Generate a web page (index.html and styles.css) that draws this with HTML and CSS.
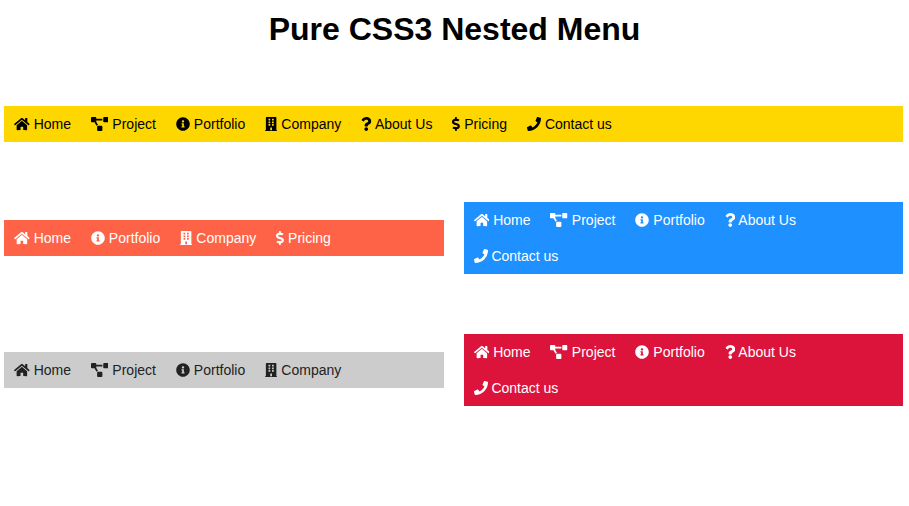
FILE: index.html
```html
<!DOCTYPE html>
<html>
<head>
<meta charset="UTF-8">
<title>Pure CSS3 Nested Menu</title>
<link rel="stylesheet" href="styles.css">
</head>
<body>
<svg class="defs" xmlns="http://www.w3.org/2000/svg">
  <symbol id="i-home" viewBox="0 0 576 512"><path d="M280.37 148.26L96 300.11V464a16 16 0 0 0 16 16l112.06-.29a16 16 0 0 0 15.92-16V368a16 16 0 0 1 16-16h64a16 16 0 0 1 16 16v95.64a16 16 0 0 0 16 16.05L464 480a16 16 0 0 0 16-16V300L295.67 148.26a12.19 12.19 0 0 0-15.3 0zM571.6 251.47L488 182.56V44.05a12 12 0 0 0-12-12h-56a12 12 0 0 0-12 12v72.61L318.47 43a48 48 0 0 0-61 0L4.34 251.47a12 12 0 0 0-1.6 16.9l25.5 31A12 12 0 0 0 45.15 301l235.22-193.74a12.19 12.19 0 0 1 15.3 0L530.9 301a12 12 0 0 0 16.9-1.6l25.5-31a12 12 0 0 0-1.7-16.93z"/></symbol>
  <symbol id="i-project" viewBox="0 0 640 512"><path d="M384 320H256c-17.67 0-32 14.33-32 32v128c0 17.67 14.33 32 32 32h128c17.67 0 32-14.33 32-32V352c0-17.67-14.33-32-32-32zM192 32c0-17.67-14.33-32-32-32H32C14.33 0 0 14.33 0 32v128c0 17.67 14.33 32 32 32h95.72l73.16 128.04C211.98 300.98 232.4 288 256 288h.28L192 175.51V128h224V64H192V32zM608 0H480c-17.67 0-32 14.33-32 32v128c0 17.67 14.33 32 32 32h128c17.67 0 32-14.33 32-32V32c0-17.67-14.33-32-32-32z"/></symbol>
  <symbol id="i-info" viewBox="0 0 512 512"><path d="M256 8C119.043 8 8 119.083 8 256c0 136.997 111.043 248 248 248s248-111.003 248-248C504 119.083 392.957 8 256 8zm0 110c23.196 0 42 18.804 42 42s-18.804 42-42 42-42-18.804-42-42 18.804-42 42-42zm56 254c0 6.627-5.373 12-12 12h-88c-6.627 0-12-5.373-12-12v-24c0-6.627 5.373-12 12-12h12v-64h-12c-6.627 0-12-5.373-12-12v-24c0-6.627 5.373-12 12-12h64c6.627 0 12 5.373 12 12v100h12c6.627 0 12 5.373 12 12v24z"/></symbol>
  <symbol id="i-building" viewBox="0 0 448 512"><path d="M436 480h-20V24c0-13.255-10.745-24-24-24H56C42.745 0 32 10.745 32 24v456H12c-6.627 0-12 5.373-12 12v20h448v-20c0-6.627-5.373-12-12-12zM128 76c0-6.627 5.373-12 12-12h40c6.627 0 12 5.373 12 12v40c0 6.627-5.373 12-12 12h-40c-6.627 0-12-5.373-12-12V76zm0 96c0-6.627 5.373-12 12-12h40c6.627 0 12 5.373 12 12v40c0 6.627-5.373 12-12 12h-40c-6.627 0-12-5.373-12-12v-40zm52 148h-40c-6.627 0-12-5.373-12-12v-40c0-6.627 5.373-12 12-12h40c6.627 0 12 5.373 12 12v40c0 6.627-5.373 12-12 12zm76 160h-64v-84c0-6.627 5.373-12 12-12h40c6.627 0 12 5.373 12 12v84zm64-172c0 6.627-5.373 12-12 12h-40c-6.627 0-12-5.373-12-12v-40c0-6.627 5.373-12 12-12h40c6.627 0 12 5.373 12 12v40zm0-96c0 6.627-5.373 12-12 12h-40c-6.627 0-12-5.373-12-12v-40c0-6.627 5.373-12 12-12h40c6.627 0 12 5.373 12 12v40zm0-96c0 6.627-5.373 12-12 12h-40c-6.627 0-12-5.373-12-12V76c0-6.627 5.373-12 12-12h40c6.627 0 12 5.373 12 12v40z"/></symbol>
  <symbol id="i-question" viewBox="0 0 384 512"><path d="M202.021 0C122.202 0 70.503 32.703 29.914 91.026c-7.363 10.58-5.093 25.086 5.178 32.874l43.138 32.709c10.373 7.865 25.132 6.026 33.253-4.148 25.049-31.381 43.63-49.449 82.757-49.449 30.764 0 68.816 19.799 68.816 49.631 0 22.552-18.617 34.134-48.993 51.164-35.423 19.86-82.299 44.576-82.299 106.405V320c0 13.255 10.745 24 24 24h72.471c13.255 0 24-10.745 24-24v-5.773c0-42.86 125.268-44.645 125.268-160.627C377.504 66.256 286.902 0 202.021 0zM192 373.459c-38.196 0-69.271 31.075-69.271 69.271 0 38.195 31.075 69.27 69.271 69.27s69.271-31.075 69.271-69.271-31.075-69.27-69.271-69.27z"/></symbol>
  <symbol id="i-dollar" viewBox="0 0 288 512"><path d="M209.2 233.4l-108-31.6C88.7 198.2 80 186.5 80 173.5c0-16.3 13.2-29.5 29.5-29.5h66.3c12.2 0 24.2 3.7 34.2 10.5 6.1 4.1 14.3 3.1 19.5-2l34.8-34c7.1-6.9 6.1-18.4-1.8-24.5C238 74.8 207.4 64.1 176 64V16c0-8.8-7.2-16-16-16h-32c-8.8 0-16 7.2-16 16v48h-2.5C45.8 64-5.4 118.7.5 183.6c4.2 46.1 39.4 83.6 83.8 96.6l102.5 30c12.5 3.7 21.2 15.3 21.2 28.3 0 16.3-13.2 29.5-29.5 29.5h-66.3C100.5 368 88.5 364.3 78.5 357.5c-6.1-4.1-14.3-3.1-19.5 2l-34.8 34c-7.1 6.9-6.1 18.4 1.8 24.5 24.5 19.2 55.1 29.9 86.5 30v48c0 8.8 7.2 16 16 16h32c8.8 0 16-7.2 16-16v-48.2c46.6-.9 90.3-28.6 105.7-72.7 21.5-61.6-14.6-124.8-72.5-141.7z"/></symbol>
  <symbol id="i-phone" viewBox="0 0 512 512"><path d="M493.4 24.6l-104-24c-11.3-2.6-22.9 3.3-27.5 13.9l-48 112c-4.2 9.8-1.4 21.3 6.9 28l60.6 49.6c-36 76.7-98.9 140.5-177.2 177.2l-49.6-60.6c-6.8-8.3-18.2-11.1-28-6.9l-112 48C3.9 366.5-2 378.1.6 389.4l24 104C27.1 504.2 36.7 512 48 512c256.1 0 464-207.5 464-464 0-11.2-7.7-20.9-18.6-23.4z"/></symbol>
</svg>

<h1 class="title">Pure CSS3 Nested Menu</h1>

<div class="page">
  <ul class="menu full yellow">
    <li><a href="#"><svg class="icon" viewBox="0 0 576 512"><use href="#i-home"/></svg> Home</a></li>
    <li><a href="#"><svg class="icon" viewBox="0 0 640 512"><use href="#i-project"/></svg> Project</a></li>
    <li><a href="#"><svg class="icon" viewBox="0 0 512 512"><use href="#i-info"/></svg> Portfolio</a></li>
    <li><a href="#"><svg class="icon" viewBox="0 0 448 512"><use href="#i-building"/></svg> Company</a></li>
    <li><a href="#"><svg class="icon" viewBox="0 0 384 512"><use href="#i-question"/></svg> About Us</a></li>
    <li><a href="#"><svg class="icon" viewBox="0 0 288 512"><use href="#i-dollar"/></svg> Pricing</a></li>
    <li><a href="#"><svg class="icon" viewBox="0 0 512 512"><use href="#i-phone"/></svg> Contact us</a></li>
  </ul>

  <ul class="menu tomato">
    <li><a href="#"><svg class="icon" viewBox="0 0 576 512"><use href="#i-home"/></svg> Home</a></li>
    <li><a href="#"><svg class="icon" viewBox="0 0 512 512"><use href="#i-info"/></svg> Portfolio</a></li>
    <li><a href="#"><svg class="icon" viewBox="0 0 448 512"><use href="#i-building"/></svg> Company</a></li>
    <li><a href="#"><svg class="icon" viewBox="0 0 288 512"><use href="#i-dollar"/></svg> Pricing</a></li>
  </ul>

  <ul class="menu blue">
    <li><a href="#"><svg class="icon" viewBox="0 0 576 512"><use href="#i-home"/></svg> Home</a></li>
    <li><a href="#"><svg class="icon" viewBox="0 0 640 512"><use href="#i-project"/></svg> Project</a></li>
    <li><a href="#"><svg class="icon" viewBox="0 0 512 512"><use href="#i-info"/></svg> Portfolio</a></li>
    <li><a href="#"><svg class="icon" viewBox="0 0 384 512"><use href="#i-question"/></svg> About Us</a></li>
    <li><a href="#"><svg class="icon" viewBox="0 0 512 512"><use href="#i-phone"/></svg> Contact us</a></li>
  </ul>

  <ul class="menu grey">
    <li><a href="#"><svg class="icon" viewBox="0 0 576 512"><use href="#i-home"/></svg> Home</a></li>
    <li><a href="#"><svg class="icon" viewBox="0 0 640 512"><use href="#i-project"/></svg> Project</a></li>
    <li><a href="#"><svg class="icon" viewBox="0 0 512 512"><use href="#i-info"/></svg> Portfolio</a></li>
    <li><a href="#"><svg class="icon" viewBox="0 0 448 512"><use href="#i-building"/></svg> Company</a></li>
  </ul>

  <ul class="menu crimson">
    <li><a href="#"><svg class="icon" viewBox="0 0 576 512"><use href="#i-home"/></svg> Home</a></li>
    <li><a href="#"><svg class="icon" viewBox="0 0 640 512"><use href="#i-project"/></svg> Project</a></li>
    <li><a href="#"><svg class="icon" viewBox="0 0 512 512"><use href="#i-info"/></svg> Portfolio</a></li>
    <li><a href="#"><svg class="icon" viewBox="0 0 384 512"><use href="#i-question"/></svg> About Us</a></li>
    <li><a href="#"><svg class="icon" viewBox="0 0 512 512"><use href="#i-phone"/></svg> Contact us</a></li>
  </ul>
</div>
</body>
</html>
```

FILE: styles.css
```css
body { margin: 0; background: #fff; font-family: "Liberation Sans", Arial, sans-serif; font-size: 14px; }
.defs { display: none; }
.title { margin: 11px 0 0; font-size: 32px; line-height: 37px; font-weight: bold; text-align: center; }
.page { display: grid; grid-template-columns: 1fr 1fr; column-gap: 20px; row-gap: 60px; align-items: center; margin-top: 58px; padding: 0 6px 0 4px; }
.menu { display: flex; flex-wrap: wrap; margin: 0; padding: 0; list-style: none; }
.menu.full { grid-column: 1 / 3; }
.menu a { display: block; padding: 10px; line-height: 16px; color: inherit; text-decoration: none; }
.icon { height: 14px; width: auto; vertical-align: -2px; fill: currentColor; }
.yellow { background: #ffd700; color: #000; }
.tomato { background: #ff6347; color: #fff; }
.blue { background: #1e90ff; color: #fff; }
.grey { background: #ccc; color: #222; }
.crimson { background: #dc143c; color: #fff; }
```
